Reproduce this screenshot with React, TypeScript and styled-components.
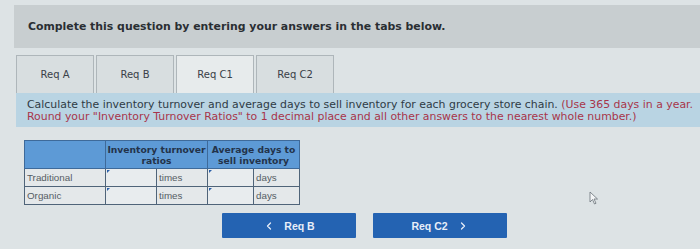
import styled, { createGlobalStyle } from "styled-components";
import { ChevronLeft, ChevronRight } from "lucide-react";

const Global = createGlobalStyle`
  html, body {
    margin: 0;
    padding: 0;
    background: #dde3e5;
    width: 700px;
    height: 249px;
    overflow: hidden;
  }
`;

const Page = styled.div`
  width: 700px;
  height: 249px;
  padding-top: 5px;
  box-sizing: border-box;
  font-family: "DejaVu Sans", Verdana, sans-serif;
  position: relative;
`;

const Banner = styled.div`
  margin-left: 14px;
  height: 43px;
  background: #c8ced0;
  display: flex;
  align-items: center;
  padding-left: 14px;
  font-weight: bold;
  font-size: 10.9px;
  color: #2a2e33;
`;

const Tabs = styled.div`
  display: flex;
  gap: 2px;
  margin: 7px 0 0 16px;
`;

const Tab = styled.div<{ $active?: boolean }>`
  width: 76px;
  height: 37px;
  border: 1px solid #aeb6ba;
  border-bottom: none;
  background: ${(p) => (p.$active ? "#e7ebec" : "#d8dee0")};
  display: flex;
  align-items: center;
  justify-content: center;
  font-size: 10px;
  color: #3a4048;
`;

const Info = styled.div`
  margin-left: 16px;
  height: 34px;
  background: #b9d4e3;
  box-sizing: border-box;
  padding: 6px 0 0 11px;
  font-size: 10.9px;
  line-height: 12px;
  color: #2f3b45;
  white-space: nowrap;
  overflow: hidden;
`;

const Red = styled.span`
  color: #a8354a;
`;

const Table = styled.table`
  margin: 13px 0 0 24px;
  border-collapse: collapse;
  font-family: "Liberation Sans", Arial, sans-serif;
  font-size: 9.8px;
  color: #555d64;
`;

const Head = styled.th<{ $w: number }>`
  width: ${(p) => p.$w}px;
  height: 27px;
  background: #5d9ad6;
  border: 1px solid #3e6a9a;
  font-family: "DejaVu Sans", Verdana, sans-serif;
  font-weight: bold;
  font-size: 9.2px;
  line-height: 11px;
  color: #23334a;
  padding: 0;
`;

const Label = styled.td`
  height: 17px;
  border: 1px solid #4f6479;
  background: #e4e8ea;
  padding: 0 0 0 2px;
`;

const Input = styled.td`
  border: 1px solid #4f6479;
  background: #e8ecee;
  padding: 0;
  position: relative;
  &::before {
    content: "";
    position: absolute;
    left: 1px;
    top: 1px;
    border-left: 3px solid #2a5fa8;
    border-bottom: 3px solid transparent;
  }
`;

const Unit = styled.td`
  border: 1px solid #4f6479;
  background: #e4e8ea;
  padding: 0 0 0 2px;
`;

const Buttons = styled.div`
  display: flex;
  gap: 17px;
  margin: 8px 0 0 222px;
`;

const NavButton = styled.div`
  width: 134px;
  height: 25px;
  background: #2463b2;
  border-radius: 1px;
  display: flex;
  align-items: center;
  justify-content: center;
  gap: 9px;
  color: #e8eef8;
  font-family: "Liberation Sans", Arial, sans-serif;
  font-weight: bold;
  font-size: 10.5px;
`;

const Cursor = styled.svg`
  position: absolute;
  left: 589px;
  top: 191px;
`;

const rows = ["Traditional", "Organic"];

export default function App() {
  return (
    <Page>
      <Global />
      <Banner>Complete this question by entering your answers in the tabs below.</Banner>
      <Tabs>
        <Tab>Req A</Tab>
        <Tab>Req B</Tab>
        <Tab $active>Req C1</Tab>
        <Tab>Req C2</Tab>
      </Tabs>
      <Info>
        Calculate the inventory turnover and average days to sell inventory for each grocery store chain.{" "}
        <Red>(Use 365 days in a year.</Red>
        <br />
        <Red>Round your "Inventory Turnover Ratios" to 1 decimal place and all other answers to the nearest whole number.)</Red>
      </Info>
      <Table>
        <thead>
          <tr>
            <Head $w={80} />
            <Head $w={100} colSpan={2}>
              Inventory turnover
              <br />
              ratios
            </Head>
            <Head $w={90} colSpan={2}>
              Average days to
              <br />
              sell inventory
            </Head>
          </tr>
        </thead>
        <tbody>
          {rows.map((r) => (
            <tr key={r}>
              <Label style={{ width: 78 }}>{r}</Label>
              <Input style={{ width: 50 }} />
              <Unit style={{ width: 48 }}>times</Unit>
              <Input style={{ width: 45 }} />
              <Unit style={{ width: 43 }}>days</Unit>
            </tr>
          ))}
        </tbody>
      </Table>
      <Buttons>
        <NavButton>
          <ChevronLeft size={12} strokeWidth={2.5} />
          <span>Req B</span>
        </NavButton>
        <NavButton>
          <span>Req C2</span>
          <ChevronRight size={12} strokeWidth={2.5} />
        </NavButton>
      </Buttons>
      <Cursor width="10" height="14" viewBox="0 0 10 14">
        <path d="M1 1 L1 11 L3.5 8.5 L5.5 13 L7 12.3 L5 8 L8.5 8 Z" fill="#f4f6f7" stroke="#6a7278" strokeWidth="0.8" />
      </Cursor>
    </Page>
  );
}
